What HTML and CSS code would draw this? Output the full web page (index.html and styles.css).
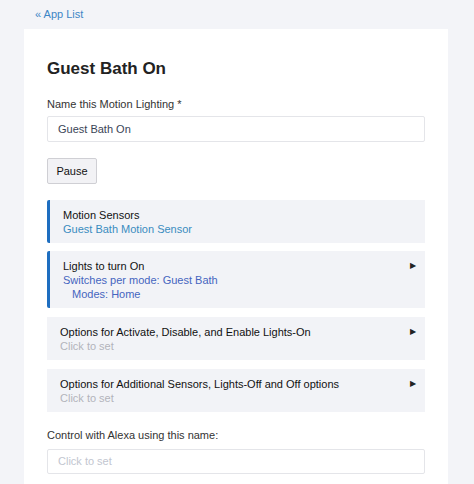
FILE: index.html
```html
<!DOCTYPE html>
<html>
<head>
<meta charset="utf-8">
<link rel="stylesheet" href="styles.css">
</head>
<body>
<div class="page">
  <a class="back" href="#">« App List</a>
  <div class="card">
    <h1 class="title">Guest Bath On</h1>
    <div class="label">Name this Motion Lighting *</div>
    <div class="input">Guest Bath On</div>
    <button class="btn">Pause</button>
    <div class="block accent">
      <div class="b-title">Motion Sensors</div>
      <div class="b-sub teal">Guest Bath Motion Sensor</div>
    </div>
    <div class="block accent">
      <div class="b-title">Lights to turn On</div>
      <div class="b-sub indigo">Switches per mode: Guest Bath</div>
      <div class="b-sub indigo indent">Modes: Home</div>
      <span class="arrow">▶</span>
    </div>
    <div class="block">
      <div class="b-title">Options for Activate, Disable, and Enable Lights-On</div>
      <div class="b-sub gray">Click to set</div>
      <span class="arrow">▶</span>
    </div>
    <div class="block">
      <div class="b-title">Options for Additional Sensors, Lights-Off and Off options</div>
      <div class="b-sub gray">Click to set</div>
      <span class="arrow">▶</span>
    </div>
    <div class="label label2">Control with Alexa using this name:</div>
    <div class="input placeholder">Click to set</div>
  </div>
</div>
</body>
</html>
```
FILE: styles.css
```css
html, body {
  margin: 0;
  padding: 0;
  background: #f3f4f8;
  font-family: "Liberation Sans", Arial, sans-serif;
}
.page {
  display: flex;
  flex-direction: column;
  padding-left: 24px;
  width: 424px;
}
.back {
  display: block;
  color: #3d86c6;
  text-decoration: none;
  font-size: 11px;
  line-height: 14px;
  padding: 7px 0 8px 11px;
}
.card {
  background: #fff;
  padding: 30px 23px 14px 23px;
  display: flex;
  flex-direction: column;
}
.title {
  margin: 0;
  font-size: 17px;
  line-height: 20px;
  font-weight: bold;
  color: #222;
}
.label {
  margin-top: 18px;
  font-size: 11px;
  line-height: 14px;
  color: #333;
}
.label2 {
  margin-top: 16px;
}
.input {
  margin-top: 5px;
  height: 24px;
  border: 1px solid #e4e5e9;
  border-radius: 2px;
  font-size: 11px;
  line-height: 24px;
  padding: 0 10px;
  color: #3a4456;
}
.label2 + .input {
  margin-top: 7px;
  height: 23px;
  line-height: 23px;
}
.placeholder {
  color: #c2c6d0;
}
.btn {
  margin-top: 16px;
  align-self: flex-start;
  width: 50px;
  height: 26px;
  padding: 0;
  background: #f2f2f5;
  border: 1px solid #cfcfd4;
  border-radius: 2px;
  font-family: "Liberation Sans", Arial, sans-serif;
  font-size: 11px;
  color: #111;
}
.block {
  position: relative;
  background: #f2f3f7;
  padding: 8px 30px 7px 13px;
  margin-top: 9px;
  font-size: 11px;
  line-height: 14px;
}
.btn + .block {
  margin-top: 16px;
}
.accent {
  border-left: 3px solid #1e6ec0;
  border-radius: 2px 0 0 2px;
}
.accent + .accent {
  margin-top: 8px;
}
.b-title {
  color: #111;
}
.teal {
  color: #3a8cc0;
}
.indigo {
  color: #4565c0;
}
.indent {
  padding-left: 9px;
}
.gray {
  color: #b2b3bb;
}
.arrow {
  position: absolute;
  right: 9px;
  top: 9px;
  font-size: 8px;
  line-height: 12px;
  color: #222;
}
```
